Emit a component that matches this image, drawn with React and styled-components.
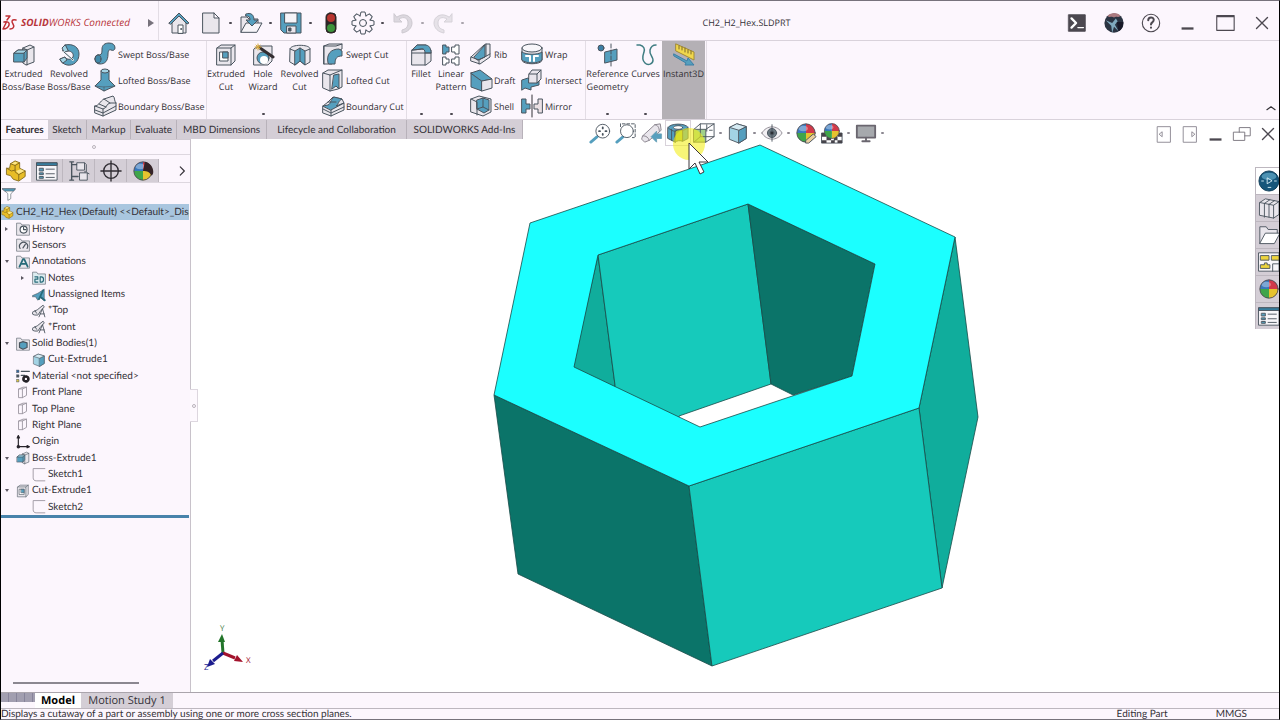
import React from "react";
import styled, { createGlobalStyle, css } from "styled-components";

const GlobalStyle = createGlobalStyle`
  * {
    box-sizing: border-box;
  }

  body {
    margin: 0;
    background: #fcf6fd;
    color: #333036;
    font-family: Lato, "Open Sans", sans-serif;
    font-size: 10px;
    line-height: 13px;
    text-rendering: geometricPrecision;
  }

  button {
    margin: 0;
    padding: 0;
    border: 0;
    background: none;
    color: inherit;
    font: inherit;
    text-rendering: inherit;
    white-space: nowrap;
  }

  ul {
    margin: 0;
    padding: 0;
    list-style: none;
  }
`;

const Window = styled.div`
  display: flex;
  flex-direction: column;
  height: 100vh;
  border: 1px solid #000000;
  border-top-color: #77727c;
  border-bottom-color: #77727c;
  overflow: hidden;
`;

const Svg = styled.svg`
  display: block;
  flex: none;
  width: ${({ $size }) => $size}px;
  height: ${({ $size }) => $size}px;
  fill: none;
  stroke: #4a545e;
  stroke-width: 1;
  stroke-linejoin: round;
  stroke-linecap: round;
`;

const B = "#559fbe";
const L = "#a3d3e4";
const G = "#e9e6ec";

const Ball = () => (
  <g stroke="none">
    <path d="M12 12V2a10 10 0 0 1 10 10z" fill="#d13a4a" />
    <path d="M12 12h10a10 10 0 0 1-10 10z" fill="#e6c32f" />
    <path d="M12 12v10A10 10 0 0 1 2 12z" fill="#3fa54a" />
    <path d="M12 12H2A10 10 0 0 1 12 2z" fill="#3878bd" />
    <ellipse cx="9" cy="7" rx="5" ry="3" fill="#fff" opacity=".35" />
    <circle cx="12" cy="12" r="10" fill="none" stroke="#4d4a52" />
  </g>
);

const icons = {
  home: (
    <>
      <path d="M5 11v11h14V11L12 4z" fill={G} />
      <path d="M2 12 12 2l10 10-2 1-8-8-8 8z" fill={B} />
      <path d="M11 22v-8h5v8z" fill="#fff" />
      <circle cx="14" cy="18" r=".5" />
    </>
  ),
  page: <path d="M4 2h11l5 5v15H4zM15 2v5h5" fill={G} />,
  open: (
    <>
      <path d="M2 21V6h6l2 2h9v4" fill={G} />
      <path d="m2 21 5-9h16l-5 9z" fill="#f6f4f8" />
      <path d="M7 3c5-2 8 1 8 6h4l-6 6-6-6h4c0-3-1-4-4-4z" fill={B} />
    </>
  ),
  save: (
    <>
      <path d="M2 2h20v20H5l-3-3z" fill={B} />
      <path d="M6 2h12v10H6z" fill="#f6f4f8" />
      <path d="M8 15h9v7H8z" fill={G} />
      <path d="M10 17h2v3h-2z" fill="#46505a" />
    </>
  ),
  traffic: (
    <>
      <rect x="7" y="2" width="10" height="20" rx="4" fill="#2c2627" stroke="#2c2627" />
      <circle cx="12" cy="7" r="4" fill="#b8352f" stroke="none" />
      <circle cx="12" cy="17" r="4" fill="#3c933a" stroke="none" />
    </>
  ),
  gear: (
    <>
      {[0, 45, 90, 135, 180, 225, 270, 315].map((a) => (
        <path key={a} d="M9 5 10 1h4l1 4" transform={`rotate(${a} 12 12)`} />
      ))}
      <circle cx="12" cy="12" r="3.5" />
    </>
  ),
  undo: <path d="M3 3v8h8L8 8c5-3 9-1 9 4s-3 6-6 7v3c6-1 10-5 10-10C21 5 13 1 6 6z" fill="#dcd8df" stroke="#cdc9d0" />,
  redo: <path d="M21 3v8h-8l3-3c-5-3-9-1-9 4s3 6 6 7v3c-6-1-10-5-10-10C3 5 11 1 18 6z" fill="#e6e2e8" stroke="#d6d2d9" />,
  extrudeBoss: (
    <>
      <path d="m11 5 7-3 4 2v15l-8 3-3-2z" fill={G} />
      <path d="M15 7v15M11 5l4 2 7-3" />
      <path d="m2 10 4-3h9v8l-3 4H2z" fill={B} />
      <path d="m2 10 4-3h9l-3 3z" fill={L} />
      <path d="M12 10v9" />
    </>
  ),
  revolveBoss: (
    <>
      <path d="M8 2c9-2 14 3 14 9 0 8-6 12-12 11-4-1-6-3-7-6l5-2c2 3 6 3 8 0 1-3-1-6-5-6H6z" fill={B} />
      <path d="M8 2 5 5l2 4 4-1zM3 16l5-2 2 3-4 3z" fill={L} />
      <path d="m7 9 9 8" stroke="#e9f3f7" strokeWidth="2" />
      <path d="m7 9 9 8" />
    </>
  ),
  sweptBoss: (
    <>
      <path d="M2 17c0-3 2-5 5-4 2-1 2-3 2-6 0-4 3-6 7-6 4 0 6 2 6 5 0 2-2 3-4 2-2-1-3 1-3 4 0 7-3 10-8 10-3 0-5-2-5-5z" fill={B} />
      <ellipse cx="5" cy="17" rx="3" ry="4" fill="#418aa9" />
    </>
  ),
  loftBoss: (
    <>
      <path d="M8 3v9L2 18l9 5 11-5-6-6V3z" fill={B} />
      <ellipse cx="12" cy="3" rx="4" ry="2" fill={L} />
      <path d="m2 18 9 1 11-1M11 19v4" strokeWidth=".6" />
    </>
  ),
  boundaryBoss: (
    <>
      <path d="M2 12c4 0 5-5 9-7l9-3c2 1 1 5 3 7v7l-13 6-8-3z" fill={G} />
      <path d="m2 12 8 3c4-1 3-5 7-6h6M10 15v7M11 5l6 4M6 10l7 3M2 16l8 3 13-7" />
    </>
  ),
  extrudeCut: (
    <>
      <path d="m3 5 4-3h14v16l-4 4H3z" fill={G} />
      <path d="M3 5h14v17M17 5l4-3" />
      <path d="M6 9h8v9H6z" fill="#fff" />
      <path d="M9 9h5v6H9z" fill={B} />
    </>
  ),
  hole: (
    <>
      <path d="m3 6 4-3h14v15l-4 4H3z" fill={G} />
      <circle cx="12" cy="15" r="6" fill={B} />
      <circle cx="13" cy="17" r="4" fill="#fff" stroke="none" />
      <path d="m9 5 13 9" stroke="#332d31" strokeWidth="3" />
      <path d="M7 1v6M4 4h6M5 2l4 4M9 2 5 6" stroke="#d9a836" />
    </>
  ),
  revolveCut: (
    <>
      <path d="M2 6c0-5 20-5 20 0v13l-5 3-5-4-5 4-5-3z" fill={G} />
      <path d="m7 8 5-3 5 3v14l-5-4-5 4z" fill={B} />
      <path d="M12 5v13" />
      <path d="M7 8 2 6M17 8l5-2" />
    </>
  ),
  sweptCut: (
    <>
      <path d="M3 4 8 2h13v5l-4 2c-5 0-6 5-6 8v5H3z" fill={G} />
      <path d="M3 4h12l6-2M3 4v18" />
      <path d="M7 21C5 12 10 7 18 7l3 2v5c-5 0-7 2-7 8H9z" fill={B} />
    </>
  ),
  loftCut: (
    <>
      <path d="M2 5 7 2h14v17l-4 2-8 2-7-3z" fill={G} />
      <path d="m2 5 7 2v16M9 7l12-5" />
      <path d="m13 7 5-1v15l-3-3-4 3z" fill={B} />
    </>
  ),
  boundaryCut: (
    <>
      <path d="M2 12 7 8l5-5 9 2 2 4v7l-13 6-8-3z" fill={G} />
      <path d="m2 12 5-1c3-1 2-5 6-8l8 2c-4 2-3 5-6 7l8-3-13 7z" fill={B} />
      <path d="M7 8h8M2 15l8 4 13-6M10 16v6" />
    </>
  ),
  fillet: (
    <>
      <path d="M3 7 8 2h9l5 5v11l-5 4H3z" fill={G} />
      <path d="M3 7 8 2h8c4 0 6 3 6 8h-6c0-3-1-4-3-4z" fill={B} />
      <path d="M3 10h13v12M16 10h6M3 7l11-1" />
    </>
  ),
  linear: (
    <>
      <path d="M4 2h3v2h3v5H7v2H4z" fill={B} />
      <path d="M13 4h3V2h4v9h-4V9h-3zM4 14h3v2h3v4H7v2H4zM13 16h3v-2h4v8h-4v-2h-3z" fill="#fff" />
    </>
  ),
  rib: (
    <>
      <path d="m2 15 13-12 2-1h4v13l-10 7-9-3z" fill={G} />
      <path d="m5 15 11-12v12l-7 3z" fill={B} />
      <path d="m2 15 8 3 11-6M10 18v4M17 2v12" />
    </>
  ),
  draft: (
    <>
      <path d="M2 5v14l11 4V13z" fill={B} />
      <path d="m2 5 9-3 12 9-10 2z" fill={B} />
      <path d="m13 13 10-2v9l-10 3z" fill={G} />
    </>
  ),
  shell: (
    <>
      <path d="M2 5 10 2l12 3v13l-8 4-12-4z" fill={G} />
      <path d="m8 6 6-2 6 2v10l-5 3-7-4z" fill={B} />
      <path d="M14 4v9l-6 2M14 13l6 3" />
      <path d="M2 5l6 3v13" />
    </>
  ),
  wrap: (
    <>
      <path d="M2 6v12c0 5 20 5 20 0V6z" fill={G} />
      <path d="M2 10c4 3 16 3 20 0v8c-4 4-16 4-20 0z" fill={B} />
      <ellipse cx="12" cy="6" rx="10" ry="4" fill="#f8f6fa" />
      <path d="M6 14h4v5M14 19v-5h4" stroke="#fff" strokeWidth="2" />
    </>
  ),
  intersect: (
    <>
      <path d="m2 12 6-2 4 4 4-3 3 2v4l-8 2v3l-6-2-3 2z" fill={B} />
      <path d="m9 6 3-4h9v9l-4 4H9z" fill={G} />
      <path d="M9 6h8v9M17 6l4-4" />
    </>
  ),
  mirror: (
    <>
      <path d="M2 5h4v5h4v5H6v4H2z" fill={B} />
      <path d="M22 5h-4v5h-4v5h4v4h4z" fill="#eadfe3" />
      <path d="M12 1v22" stroke="#333036" />
    </>
  ),
  reference: (
    <>
      <circle cx="5" cy="5" r="3" fill="#3c7fa6" />
      <path d="m9 9 12-3v11L9 20z" fill={B} />
      <path d="M15 1v22" strokeDasharray="4 2" />
    </>
  ),
  curves: <path d="M3 2h3c4 1 5 4 4 7s-3 7 1 11c3 3 8 1 8-3 0-3-4-6-3-10 1-4 4-5 6-5" stroke="#3f7d82" strokeWidth="1.5" />,
  instant: (
    <>
      <path d="m4 1 18 8v8L4 8z" fill="#f0d74c" stroke="#a28b35" />
      <path d="M7 3v3M10 4v3M13 5v4M16 7v3M19 8v3" stroke="#7c6a2a" />
      <path d="m2 11 13 7 1-3 6 7h-9l1-2-12-7z" fill={B} stroke="#3c7fa6" />
    </>
  ),
  zoomFit: (
    <>
      <path d="m2 22 7-6" stroke={B} strokeWidth="3" />
      <circle cx="15" cy="10" r="7.5" fill="#fff" />
      <path d="M15 6v1M15 13v1M11 10h1M18 10h1" strokeWidth="2" />
    </>
  ),
  zoomArea: (
    <>
      <path d="M6 5V2h16v15h-3" strokeDasharray="3 2" />
      <path d="m2 22 7-6" stroke={B} strokeWidth="3" />
      <circle cx="13" cy="10" r="7" fill="#fff" />
    </>
  ),
  prevView: (
    <>
      <path d="M2 15 15 3l6-1 1 7L9 20l-5 2-3-3z" fill={G} stroke="#85808a" />
      <path d="M2 15c4 0 6 2 7 5M15 3c3 0 5 3 5 7" stroke="#85808a" />
      <path d="M22 13h-5v-3l-6 6 6 6v-4h5z" fill={B} stroke="#6aa1b8" />
    </>
  ),
  section: (
    <>
      <path d="M1 6c3-5 19-5 22 0v12l-6 3V9l-8 1v12l-8-4z" fill={B} />
      <path d="M9 10c3-2 6-2 8-1v12c-3-1-6-1-8 1z" fill="#b5c93c" />
      <path d="M5 8v12M1 6c3 3 5 4 8 4M23 6c-2 2-4 3-6 3" />
      <ellipse cx="12" cy="6" rx="5" ry="2" fill="#fff" />
    </>
  ),
  orient: (
    <>
      <path d="M1 8h13v14H1z" fill="#9fd08a" />
      <path d="m1 8 7-6h15v14l-9 6M14 8l9-6M8 2v14L1 22M8 16h15M15 3v7M18 9h3" />
    </>
  ),
  cube: (
    <>
      <path d="m3 6 8-4 10 3v13l-8 5-10-4z" fill={L} />
      <path d="m13 9 8-4v13l-8 5z" fill={B} />
      <path d="m3 6 10 3 8-4-10-3z" fill="#d5ebf3" />
    </>
  ),
  eye: (
    <>
      <path d="M1 12C6 3 18 3 23 12 18 21 6 21 1 12z" fill="#f3f1f4" stroke="#8c8891" />
      <circle cx="12" cy="12" r="5" fill="#6b7880" />
      <circle cx="12" cy="12" r="2" fill="#111" />
      <path d="M12 3v18" />
    </>
  ),
  appearance: (
    <>
      <Ball />
      <path d="m12 20 8-7 3 3-8 7h-3z" fill="#e9cf9e" />
    </>
  ),
  scene: (
    <>
      <path d="M1 12h22v11H1z" fill="#fff" />
      <path d="M1 12h5v4H1zM18 12h5v4h-5zM6 16h5v4H6zM14 16h4v4h-4zM1 20h5v3H1zM11 20h4v3h-4zM18 20h5v3h-5z" fill="#45434a" stroke="none" />
      <g transform="translate(2 0) scale(.82)"><Ball /></g>
    </>
  ),
  ball: <Ball />,
  darkBall: (
    <>
      <Ball />
      <path d="M12 12 14 2c10 2 11 14 7 15-2-4-4-5-9-5z" fill="#342327" stroke="none" />
    </>
  ),
  monitor: (
    <>
      <path d="M2 4h20v13H2z" fill="#a6a9ad" stroke="#6a666f" strokeWidth="2" />
      <path d="M12 17v4M8 21h8" stroke="#6a666f" strokeWidth="2" />
    </>
  ),
  part: (
    <>
      <path d="m2 9 3 0 1-5 5-3 5 2v6l6 3v6l-7 5-6-2-3-4-4-1z" fill="#e8bd27" stroke="#83691c" />
      <path d="m6 4 5 2 5-3M11 6v7l4 3 7-4M15 16v6M2 9l5 3 4-1" stroke="#83691c" />
      <path d="m7 4 4-2 3 1-3 2zM12 12l5-2 4 2-6 3z" fill="#fbe78a" stroke="none" />
    </>
  ),
  props: (
    <>
      <path d="M1 3h22v19H1z" fill="#f7f6f9" />
      <path d="M1 3h22v3H1z" fill="#367e9f" />
      <path d="M4 9h4v3H4zM4 14h4v2H4zM4 18h4v2H4z" fill={B} />
      <path d="M11 10h9M11 15h9M11 19h9" />
    </>
  ),
  config: (
    <>
      <path d="M4 2v20M4 5h6M4 18h7M2 2h4M2 22h4" strokeWidth="1.5" />
      <path d="M10 3h8v8h-8zM13 14h8v8h-8z" fill={G} />
      <path d="M18 3l2 2v8h-2M21 14l2 1" />
    </>
  ),
  target: (
    <g stroke="#302d33" strokeWidth="1.5">
      <circle cx="12" cy="12" r="8" />
      <path d="M12 1v22M1 12h22" />
    </g>
  ),
  funnel: (
    <>
      <path d="M1 3h22l-8 9v8l-5 3V12z" fill="#fff" />
      <path d="M1 3h22l-3 4H5z" fill={B} />
    </>
  ),
  history: (
    <>
      <path d="M1 22V2h7l2 3h13v17z" fill={G} />
      <circle cx="13" cy="13" r="6" fill="#fff" strokeWidth="2" />
      <path d="M13 9v4h4" strokeWidth="2" />
    </>
  ),
  sensors: (
    <>
      <path d="M1 22V2h7l2 3h13v17z" fill={G} />
      <path d="M7 18a7 7 0 1 1 12 0M12 17l4-6" strokeWidth="2" />
    </>
  ),
  annotations: (
    <>
      <path d="M1 22V2h7l2 3h13v17z" fill={G} />
      <path d="m6 20 6-13h2l6 13M9 15h8" stroke="#276b79" strokeWidth="3" />
    </>
  ),
  notes: (
    <>
      <path d="M1 22V2h7l2 3h13v17z" fill="#dcecf0" />
      <path d="M5 10h5v4H5v5h5M14 10h2c5 0 5 9 0 9h-2z" stroke="#276b79" strokeWidth="2" />
    </>
  ),
  unassigned: (
    <>
      <path d="M1 13 10 9l11-7v20l-7-6-4 5-4-6H1z" fill={B} />
      <path d="m12 19 7-15M14 15l8 6" strokeWidth="3" stroke="#276b79" />
    </>
  ),
  note: (
    <g strokeWidth="1.5">
      <path d="m1 14 8-4 10-8 2 3-7 8-4 6H5l-3-1z" fill={G} />
      <path d="m12 22 6-14 4 14M14 17h7M5 11l3 5" />
    </g>
  ),
  bodies: (
    <>
      <path d="M1 22V2h7l2 3h13v17z" fill={G} />
      <path d="m6 10 6-2 7 2v8l-7 3-6-3z" fill={B} strokeWidth="2" />
    </>
  ),
  material: (
    <>
      <path d="M9 4h14M9 11h6" strokeWidth="2" />
      <path d="M1 2h4v4H1z" fill="#2c63a0" />
      <path d="M1 10h4v4H1z" fill="#46505a" />
      <path d="M1 18h4v4H1z" fill="#e0c73b" />
      <circle cx="17" cy="17" r="5" stroke="#221f25" strokeWidth="3" strokeDasharray="3 1" />
      <circle cx="17" cy="17" r="3" stroke="#221f25" strokeWidth="2" />
    </>
  ),
  plane: <path d="M5 5h6v15H5zM11 5l7-3v14l-7 4M5 5l7-3h6" stroke="#99949e" strokeWidth="1.5" />,
  origin: (
    <g stroke="#28242b" strokeWidth="2">
      <path d="M4 3v17h17" />
      <path d="m2 5 2-4 2 4zM19 18l4 2-4 2z" fill="#28242b" />
      <circle cx="4" cy="20" r="2" fill="#28242b" />
    </g>
  ),
  sketch: <path d="M22 1H2v16c0 3 2 5 5 5h15" stroke="#99949e" strokeWidth="1.5" />,
  console: (
    <>
      <path d="M3 3h18v18H3z" fill="#4c4850" stroke="#4c4850" />
      <path d="m6 7 5 5-5 5" stroke="#fff" strokeWidth="2.5" />
      <path d="M13 17h6" stroke="#fff" strokeWidth="1.5" />
    </>
  ),
  avatar: (
    <g stroke="none">
      <circle cx="12" cy="12" r="10.5" fill="#2b3442" />
      <path d="M5 4c4-4 11-4 14 0-3 3-4 0-7 2-3-2-5 1-7-2z" fill="#ab7a80" />
      <path d="m3 9 7 3 4-5 2 3-3 4 4 7-5-5-2 7-1-8z" fill="#7fa9bd" />
      <path d="M15 11h7c0 5-2 9-5 10z" fill="#191a28" />
    </g>
  ),
  help: (
    <g stroke="#4c4850" strokeWidth="1.2">
      <circle cx="12" cy="12" r="9.5" />
      <path d="M9 9c0-4 6-4 6-.5 0 3-3 2.5-3 5M12 17v.2" strokeWidth="2.2" />
    </g>
  ),
  minimize: <path d="M5 18h13" stroke="#4c4850" strokeWidth="2.5" strokeLinecap="butt" />,
  maximize: <path d="M3 4h19v16H3zM3 5h19" stroke="#4c4850" strokeWidth="1.2" />,
  close: <path d="m6 6 12 12M18 6 6 18" stroke="#4c4850" strokeWidth="1.5" />,
  paneLeft: <path d="M5 4h14v17H5zM10 10v5l-3-2.5z" stroke="#8b8790" />,
  paneRight: <path d="M5 4h14v17H5zM14 10v5l3-2.5z" stroke="#8b8790" />,
  restore: <path d="M3 10h12v9H3zM9 10V5h12v9h-6" stroke="#77737c" />,
  up: <path d="m5 15 7-5 7 5" stroke="#333036" strokeWidth="2" />,
  right: <path d="m9 5 7 7-7 7" stroke="#333036" strokeWidth="2" />,
  compass: (
    <>
      <circle cx="12" cy="12" r="11" fill="#17567a" stroke="#113d58" />
      <ellipse cx="12" cy="7" rx="8" ry="4" fill="#4b91b2" stroke="none" />
      <path d="M10 9v6l5-3zM4 12h2M18 12h2M11 19h3" stroke="#d6edf5" />
    </>
  ),
  library: (
    <>
      <path d="m2 6 6-4 15 3v14l-6 4L2 20z" fill={G} />
      <path d="m2 6 5 1v15M7 7l6-4M7 7l5 1v14M12 8l6-4M12 8l5 1v14M17 9l6-4" />
    </>
  ),
  folder: (
    <>
      <path d="M2 21V3h7l2 3h10v4" fill={G} />
      <path d="m2 21 6-11h16l-6 11z" fill="#fff" />
    </>
  ),
  palette: (
    <>
      <path d="M1 2h22v20H1z" fill="#f9f7fa" />
      <path d="M3 5h9v5H3zM15 5h8v5h-8zM3 19h10v-4h-3v-2H7v2H3z" fill="#edd43d" />
      <path d="M16 22v-8h7" />
    </>
  ),
};

const Icon = ({ name, size = 24 }) => (
  <Svg $size={size} viewBox="0 0 24 24" aria-hidden="true">{icons[name]}</Svg>
);

const Caret = styled.span`
  width: 3px;
  height: 2px;
  flex: none;
  border-radius: 1px;
  background: ${({ $color }) => $color || "#4c4850"};
`;

/* Title bar */

const TitleBar = styled.header`
  display: flex;
  flex: none;
  align-items: center;
  height: 40px;
  padding-top: 4px;
  border-bottom: 1px solid #d9d2db;
  font-family: "Open Sans", sans-serif;
`;

const Brand = styled.div`
  display: flex;
  align-items: center;
  gap: 4px;
  width: 157px;
  padding: 0 4px 0 1px;
  color: #b8363c;
  font-style: italic;
  white-space: nowrap;
`;

const BrandMark = styled.svg`
  width: 15px;
  height: 16px;
  fill: none;
  stroke: #c03036;
  stroke-width: 1.5;
  stroke-linecap: round;
  stroke-linejoin: round;
`;

const BrandArrow = styled.button`
  margin-left: auto;
  border: solid transparent;
  border-width: 4px 0 4px 6px;
  border-left-color: #77727c;
`;

const Toolbar = styled.div`
  display: flex;
  align-items: center;
  align-self: stretch;
  margin-top: -4px;
  padding: 4px 0 0;
  border-left: 1px solid #e3dde5;
`;

const ToolButton = styled.button`
  display: flex;
  align-items: center;
  gap: 6px;
  width: ${({ $width }) => $width || 40}px;
  padding-left: ${({ $inset }) => $inset || 0}px;
`;

const FileName = styled.h1`
  flex: 1;
  margin: 0;
  padding-right: 44px;
  font-size: 9px;
  font-weight: 400;
  text-align: center;
`;

const WindowButtons = styled.div`
  display: flex;
  gap: ${({ $gap }) => $gap}px;
  padding-right: ${({ $end }) => $end || 0}px;
`;

/* Command manager */

const Ribbon = styled.div`
  display: flex;
  flex: none;
  height: 79px;
  border-bottom: 1px solid #d9d2db;
  font-family: "Open Sans", sans-serif;
  font-size: 9px;
`;

const Group = styled.div`
  display: flex;
  width: ${({ $width }) => $width}px;
  border-right: 1px solid #e3dde5;
`;

const LargeCommand = styled.button`
  display: flex;
  flex-direction: column;
  align-items: center;
  width: ${({ $width }) => $width}px;
  padding: 2px 0 4px;
  background: ${({ $active }) => ($active ? "#b4b0b5" : "none")};

  span:first-of-type {
    white-space: pre;
  }

  ${Caret} {
    margin-top: auto;
  }
`;

const CommandColumn = styled.div`
  display: grid;
  grid-template-rows: repeat(3, 26px);
  padding-left: ${({ $inset }) => $inset || 0}px;
  width: ${({ $width }) => $width}px;
`;

const SmallCommand = styled.button`
  display: flex;
  align-items: center;
  gap: 1px;
`;

const CollapseRibbon = styled.button`
  align-self: flex-end;
  margin: 0 1px 4px auto;
`;

/* Tabs, heads-up toolbar */

const TabRow = styled.div`
  position: relative;
  z-index: 1;
  display: flex;
  flex: none;
  height: 19px;
  background: #ffffff;
`;

const Tab = styled.button`
  width: ${({ $width }) => $width}px;
  padding-top: 1px;
  border-right: 1px solid #b8b2ba;
  background: #d4ced6;

  ${({ $active }) => $active && css`
    border-right: 0;
    background: #fcf6fd;
    font-weight: 700;
  `}
`;

const HeadsUp = styled.div`
  display: flex;
  flex: none;
  align-items: flex-start;
  height: 26px;
  margin-left: 64px;
`;

const ViewButton = styled.button`
  position: relative;
  display: flex;
  align-items: center;
  gap: 4px;
  width: ${({ $caret }) => ($caret ? 34 : 26)}px;
  height: 26px;
  padding: 0 2px;

  ${({ $hover }) => $hover && css`
    padding: 0 1px;
    border: 1px solid #d8d2da;
    z-index: 1;
  `}
`;

const Pointer = styled.svg`
  position: absolute;
  top: 4px;
  left: 4px;
  width: 44px;
  height: 52px;
`;

const DocumentButtons = styled(WindowButtons)`
  height: 27px;
  margin-left: auto;
  align-items: center;
`;

/* Work area */

const WorkArea = styled.main`
  display: flex;
  flex: 1;
  min-height: 0;
  background: #ffffff;
`;

const SidePanel = styled.aside`
  display: flex;
  flex-direction: column;
  position: relative;
  flex: none;
  width: 190px;
  border-top: 1px solid #d1cbd3;
  border-right: 1px solid #c8c2ca;
  background: #fcf6fd;
`;

const Grip = styled.div`
  display: flex;
  align-items: center;
  justify-content: center;
  height: 15px;
  padding-right: 4px;
  border-bottom: 1px solid #ddd7df;
`;

const GripDot = styled.span`
  width: 4px;
  height: 4px;
  border: 1px solid #b9b3bb;
  border-radius: 2px;
`;

const ManagerTabs = styled.div`
  display: flex;
  height: 28px;
  padding-top: 4px;
  border-bottom: 1px solid #ddd7df;
`;

const ManagerTab = styled.button`
  display: flex;
  align-items: center;
  justify-content: center;
  width: 32px;
  border-right: 1px solid #bdb7bf;
  background: #d4ced6;

  ${({ $plain }) => $plain && css`
    width: 30px;
    border-right: 0;
    background: none;
  `}

  &:last-child {
    margin-left: auto;
    width: 16px;
  }
`;

const FilterButton = styled.button`
  height: 21px;
  padding-left: 1px;
  text-align: left;
`;

const Tree = styled.ul`
  display: grid;
  grid-template-columns: minmax(0, 1fr);
  grid-auto-rows: 1fr;
  height: 311px;
  margin-right: 1px;
`;

const TreeItem = styled.li`
  display: flex;
  align-items: center;
  padding: 1px 0 0 ${({ $level }) => $level * 16}px;
  white-space: nowrap;
  background: ${({ $selected }) => ($selected ? "#a9c6df" : "none")};
  overflow: hidden;

  svg {
    margin: 0 2px 0 ${({ $selected }) => ($selected ? 0 : 1)}px;
  }
`;

const Twisty = styled.span`
  flex: none;
  width: 14px;
  padding-left: 4px;
`;

const TwistyMark = styled.span`
  display: block;
  width: 0;
  height: 0;
  border: solid transparent;
  border-width: ${({ $open }) => ($open ? "3px 2px 0" : "2px 0 2px 3px")};
  border-color: ${({ $open }) => ($open ? "#5c5761 transparent" : "transparent #5c5761")};
`;

const RollbackBar = styled.div`
  height: 3px;
  margin-right: 1px;
  background: #4883ab;
`;

const ScrollThumb = styled.div`
  width: 126px;
  height: 2px;
  margin: auto 0 8px 12px;
  background: #8b8790;
`;

const Splitter = styled.button`
  position: absolute;
  top: 249px;
  right: -8px;
  display: flex;
  align-items: center;
  justify-content: center;
  width: 8px;
  height: 33px;
  border: 1px solid #ddd7df;
  border-left: 0;
  background: #fdf9fe;
`;

const Canvas = styled.svg`
  flex: 1;
  min-width: 0;
  height: 100%;
`;

const TaskPane = styled.nav`
  flex: none;
  width: 24px;
  margin-top: 28px;
`;

const TaskButton = styled.button`
  display: flex;
  align-items: center;
  width: 24px;
  height: 27px;
  padding-left: 2px;
  border: 1px solid #bdb7bf;
  border-width: 1px 0 0 1px;
  background: ${({ $active }) => ($active ? "#ffffff" : "#d4ced6")};
  overflow: hidden;
`;

/* Bottom strips */

const BottomTabs = styled.div`
  display: flex;
  flex: none;
  height: 16px;
  border-top: 1px solid #aaa4ac;
  font-family: "Open Sans", sans-serif;
`;

const TabScroller = styled.div`
  width: 34px;
  height: 9px;
  background: repeating-linear-gradient(90deg, #a29eb0 0 7px, #87839a 7px 8px);
`;

const SheetTab = styled.button`
  width: ${({ $width }) => $width}px;
  background: ${({ $active }) => ($active ? "#ffffff" : "#d4ced6")};
  color: ${({ $active }) => ($active ? "#000000" : "inherit")};
  font-size: 11px;
  font-weight: ${({ $active }) => ($active ? 700 : 400)};
  line-height: 15px;
`;

const StatusBar = styled.footer`
  display: flex;
  flex: none;
  height: 11px;
  border-top: 1px solid #bdb7bf;
  line-height: 11px;
`;

const StatusText = styled.span`
  white-space: nowrap;
  margin-left: ${({ $push }) => ($push ? "auto" : 0)};
  padding-right: ${({ $end }) => $end || 0}px;
`;

const ribbonTabs = [
  ["Features", 47],
  ["Sketch", 39],
  ["Markup", 44],
  ["Evaluate", 46],
  ["MBD Dimensions", 90],
  ["Lifecycle and Collaboration", 140],
  ["SOLIDWORKS Add-Ins", 116],
];

const viewTools = [
  ["zoomFit", "Zoom to Fit"],
  ["zoomArea", "Zoom to Area"],
  ["prevView", "Previous View"],
  ["section", "Section View"],
  ["orient", "View Orientation", true],
  ["cube", "Display Style", true],
  ["eye", "Hide/Show Items", true],
  ["appearance", "Edit Appearance"],
  ["scene", "Apply Scene", true],
  ["monitor", "View Settings", true],
];

const treeItems = [
  { icon: "history", label: "History", mark: "closed" },
  { icon: "sensors", label: "Sensors" },
  { icon: "annotations", label: "Annotations", mark: "open" },
  { icon: "notes", label: "Notes", mark: "closed", level: 1 },
  { icon: "unassigned", label: "Unassigned Items", level: 1 },
  { icon: "note", label: "*Top", level: 1 },
  { icon: "note", label: "*Front", level: 1 },
  { icon: "bodies", label: "Solid Bodies(1)", mark: "open" },
  { icon: "cube", label: "Cut-Extrude1", level: 1 },
  { icon: "material", label: "Material <not specified>" },
  { icon: "plane", label: "Front Plane" },
  { icon: "plane", label: "Top Plane" },
  { icon: "plane", label: "Right Plane" },
  { icon: "origin", label: "Origin" },
  { icon: "extrudeBoss", label: "Boss-Extrude1", mark: "open" },
  { icon: "sketch", label: "Sketch1", level: 1 },
  { icon: "extrudeCut", label: "Cut-Extrude1", mark: "open" },
  { icon: "sketch", label: "Sketch2", level: 1 },
];

const taskTabs = [
  ["compass", "3DEXPERIENCE"],
  ["library", "Design Library"],
  ["folder", "File Explorer"],
  ["palette", "View Palette"],
  ["ball", "Appearances"],
  ["props", "Custom Properties"],
];

const Large = ({ icon, label, width, caret, active }) => (
  <LargeCommand $width={width} $active={active}>
    <Icon name={icon} />
    <span>{label}</span>
    {caret && <Caret />}
  </LargeCommand>
);

const Column = ({ items, width, inset }) => (
  <CommandColumn $width={width} $inset={inset}>
    {items.map(([icon, label]) => (
      <SmallCommand key={label}>
        <Icon name={icon} />
        {label}
      </SmallCommand>
    ))}
  </CommandColumn>
);

const Model = () => (
  <Canvas viewBox="191 139 1064 553" role="img" aria-label="Hexagonal part">
    <g stroke="#184a47" strokeWidth=".8" strokeLinejoin="round">
      <path d="m955 237 23 180-36 171-23-180z" fill="#10ad9c" />
      <path d="m494 395 195 91 23 180-194-92z" fill="#0b7469" />
      <path d="m689 486 230-78 23 180-230 78z" fill="#16cabb" />
      <path d="m598 255 17 130v9l-43-22z" fill="#10ad9c" />
      <path d="m598 255 150-51 23 180-92 32v5l-64-28v-8z" fill="#16cabb" />
      <path d="m748 204 127 60-23 112-59 19-22-11z" fill="#0b7469" />
      <path
        d="M760 145 955 237 919 408 689 486 494 395 530 223zM748 204 598 255 574 367 700 427 852 376 875 264z"
        fill="#1bffff"
        fillRule="evenodd"
      />
    </g>
    <g strokeWidth="3" fontSize="8" fontFamily="Open Sans, sans-serif">
      <path d="m223 653-1-13" stroke="#23752a" />
      <path d="m222 634-4 8h7z" fill="#23752a" />
      <path d="m223 653 12 5" stroke="#a3132c" />
      <path d="m243 662-9-1 3-6z" fill="#a3132c" />
      <path d="m223 653-10 8" stroke="#1c1c8e" />
      <path d="m207 667 3-8 5 5z" fill="#1c1c8e" />
      <text x="220" y="631" fill="#3e7c46">Y</text>
      <text x="246" y="663" fill="#a3132c">X</text>
      <text x="204" y="670" fill="#1c1c8e">Z</text>
    </g>
  </Canvas>
);

const App = () => (
  <>
    <GlobalStyle />
    <Window>
      <TitleBar>
        <Brand>
          <BrandMark viewBox="0 0 15 16" aria-hidden="true">
            <path d="M4 1h4L5 5M2 7c8-2 6 7-1 7l3-6M14 5c-4-1-5 1-3 4 2 3 0 5-3 5" />
          </BrandMark>
          <span><b>SOLID</b>WORKS Connected</span>
          <BrandArrow aria-label="Show menu" />
        </Brand>
        <Toolbar>
          <ToolButton $inset={8} aria-label="Home"><Icon name="home" /></ToolButton>
          <ToolButton aria-label="New"><Icon name="page" /><Caret /></ToolButton>
          <ToolButton aria-label="Open"><Icon name="open" /><Caret /></ToolButton>
          <ToolButton aria-label="Save"><Icon name="save" /><Caret /></ToolButton>
          <ToolButton $width={32} aria-label="Rebuild"><Icon name="traffic" /></ToolButton>
          <ToolButton aria-label="Options"><Icon name="gear" /><Caret /></ToolButton>
          <ToolButton aria-label="Undo"><Icon name="undo" /><Caret $color="#aaa4ac" /></ToolButton>
          <ToolButton aria-label="Redo"><Icon name="redo" /><Caret $color="#aaa4ac" /></ToolButton>
        </Toolbar>
        <FileName>CH2_H2_Hex.SLDPRT</FileName>
        <WindowButtons $gap={15} $end={6}>
          <button aria-label="Commands"><Icon name="console" size={22} /></button>
          <button aria-label="Account"><Icon name="avatar" size={22} /></button>
          <button aria-label="Help"><Icon name="help" size={22} /></button>
          <button aria-label="Minimize"><Icon name="minimize" size={22} /></button>
          <button aria-label="Maximize"><Icon name="maximize" size={22} /></button>
          <button aria-label="Close"><Icon name="close" size={22} /></button>
        </WindowButtons>
      </TitleBar>

      <Ribbon>
        <Group $width={206}>
          <Large icon="extrudeBoss" label={"Extruded\nBoss/Base"} width={45} />
          <Large icon="revolveBoss" label={"Revolved\nBoss/Base"} width={46} />
          <Column
            width={114}
            inset={1}
            items={[["sweptBoss", "Swept Boss/Base"], ["loftBoss", "Lofted Boss/Base"], ["boundaryBoss", "Boundary Boss/Base"]]}
          />
        </Group>
        <Group $width={200}>
          <Large icon="extrudeCut" label={"Extruded\nCut"} width={38} />
          <Large icon="hole" label={"Hole\nWizard"} width={36} caret />
          <Large icon="revolveCut" label={"Revolved\nCut"} width={37} />
          <Column
            width={88}
            inset={3}
            items={[["sweptCut", "Swept Cut"], ["loftCut", "Lofted Cut"], ["boundaryCut", "Boundary Cut"]]}
          />
        </Group>
        <Group $width={179}>
          <Large icon="fillet" label="Fillet" width={28} caret />
          <Large icon="linear" label={"Linear\nPattern"} width={32} caret />
          <Column width={51} inset={2} items={[["rib", "Rib"], ["draft", "Draft"], ["shell", "Shell"]]} />
          <Column width={66} inset={2} items={[["wrap", "Wrap"], ["intersect", "Intersect"], ["mirror", "Mirror"]]} />
        </Group>
        <Group $width={121}>
          <Large icon="reference" label={"Reference\nGeometry"} width={43} caret />
          <Large icon="curves" label="Curves" width={33} caret />
          <Large icon="instant" label="Instant3D" width={43} active />
        </Group>
        <CollapseRibbon aria-label="Collapse ribbon"><Icon name="up" size={14} /></CollapseRibbon>
      </Ribbon>

      <TabRow>
        {ribbonTabs.map(([label, width], i) => (
          <Tab key={label} $width={width} $active={i === 0}>{label}</Tab>
        ))}
        <HeadsUp>
          {viewTools.map(([icon, label, caret]) => (
            <ViewButton key={icon} aria-label={label} $caret={caret} $hover={icon === "section"}>
              <Icon name={icon} size={22} />
              {caret && <Caret $color="#8b8790" />}
              {icon === "section" && (
                <Pointer viewBox="0 0 44 52" aria-hidden="true">
                  <circle cx="19" cy="19" r="16" fill="#f4ef1c" opacity=".6" />
                  <path d="M19 18v26l6-6 5 11 4-2-5-10h9z" fill="#fff" stroke="#3a343c" />
                </Pointer>
              )}
            </ViewButton>
          ))}
        </HeadsUp>
        <DocumentButtons $gap={4}>
          <button aria-label="Previous pane"><Icon name="paneLeft" size={22} /></button>
          <button aria-label="Next pane"><Icon name="paneRight" size={22} /></button>
          <button aria-label="Minimize document"><Icon name="minimize" size={22} /></button>
          <button aria-label="Restore document"><Icon name="restore" size={22} /></button>
          <button aria-label="Close document"><Icon name="close" size={22} /></button>
        </DocumentButtons>
      </TabRow>

      <WorkArea>
        <SidePanel>
          <Grip><GripDot /></Grip>
          <ManagerTabs>
            <ManagerTab $plain aria-label="Feature tree"><Icon name="part" size={22} /></ManagerTab>
            <ManagerTab aria-label="Properties"><Icon name="props" size={22} /></ManagerTab>
            <ManagerTab aria-label="Configurations"><Icon name="config" size={22} /></ManagerTab>
            <ManagerTab aria-label="Dimensions"><Icon name="target" size={22} /></ManagerTab>
            <ManagerTab aria-label="Display"><Icon name="darkBall" size={22} /></ManagerTab>
            <ManagerTab $plain aria-label="More tabs"><Icon name="right" size={14} /></ManagerTab>
          </ManagerTabs>
          <FilterButton aria-label="Filter"><Icon name="funnel" size={14} /></FilterButton>
          <Tree>
            <TreeItem $level={0} $selected>
              <Icon name="part" size={13} />
              CH2_H2_Hex (Default) &lt;&lt;Default&gt;_Disp
            </TreeItem>
            {treeItems.map(({ icon, label, mark, level = 0 }, i) => (
              <TreeItem key={i} $level={level}>
                <Twisty>{mark && <TwistyMark $open={mark === "open"} />}</Twisty>
                <Icon name={icon} size={14} />
                {label}
              </TreeItem>
            ))}
          </Tree>
          <RollbackBar />
          <ScrollThumb />
          <Splitter aria-label="Collapse panel"><GripDot /></Splitter>
        </SidePanel>
        <Model />
        <TaskPane>
          {taskTabs.map(([icon, label], i) => (
            <TaskButton key={icon} aria-label={label} $active={i === 0}><Icon name={icon} size={22} /></TaskButton>
          ))}
        </TaskPane>
      </WorkArea>

      <BottomTabs>
        <TabScroller />
        <SheetTab $width={46} $active>Model</SheetTab>
        <SheetTab $width={92}>Motion Study 1</SheetTab>
      </BottomTabs>
      <StatusBar>
        <StatusText>Displays a cutaway of a part or assembly using one or more cross section planes.</StatusText>
        <StatusText $push $end={48}>Editing Part</StatusText>
        <StatusText $end={32}>MMGS</StatusText>
      </StatusBar>
    </Window>
  </>
);

export default App;
